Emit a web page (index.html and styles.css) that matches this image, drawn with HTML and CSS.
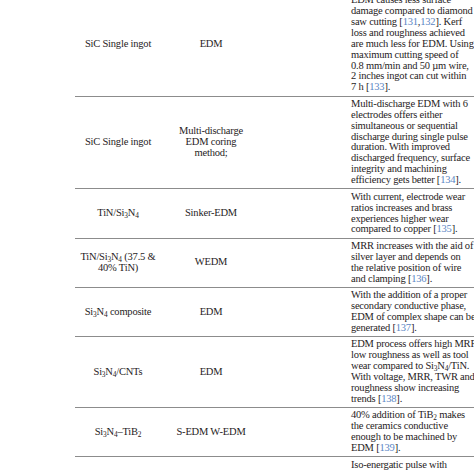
FILE: index.html
```html
<!DOCTYPE html>
<html>
<head>
<meta charset="utf-8">
<link rel="stylesheet" href="styles.css">
</head>
<body>
<table class="tbl">
  <colgroup>
    <col class="c-mat">
    <col class="c-proc">
    <col class="c-rem">
  </colgroup>
  <tr>
    <td class="lab">SiC Single ingot</td>
    <td class="lab">EDM</td>
    <td class="rem">EDM causes less surface<br>damage compared to diamond<br>saw cutting [<span class="ref">131</span>,<span class="ref">132</span>]. Kerf<br>loss and roughness achieved<br>are much less for EDM. Using<br>maximum cutting speed of<br>0.8 mm/min and 50 µm wire,<br>2 inches ingot can cut within<br>7 h [<span class="ref">133</span>].</td>
  </tr>
  <tr>
    <td class="lab">SiC Single ingot</td>
    <td class="lab">Multi-discharge<br>EDM coring<br>method;</td>
    <td class="rem">Multi-discharge EDM with 6<br>electrodes offers either<br>simultaneous or sequential<br>discharge during single pulse<br>duration. With improved<br>discharged frequency, surface<br>integrity and machining<br>efficiency gets better [<span class="ref">134</span>].</td>
  </tr>
  <tr>
    <td class="lab">TiN/Si<sub>3</sub>N<sub>4</sub></td>
    <td class="lab">Sinker-EDM</td>
    <td class="rem">With current, electrode wear<br>ratios increases and brass<br>experiences higher wear<br>compared to copper [<span class="ref">135</span>].</td>
  </tr>
  <tr>
    <td class="lab">TiN/Si<sub>3</sub>N<sub>4</sub> (37.5 &amp;<br>40% TiN)</td>
    <td class="lab">WEDM</td>
    <td class="rem">MRR increases with the aid of<br>silver layer and depends on<br>the relative position of wire<br>and clamping [<span class="ref">136</span>].</td>
  </tr>
  <tr>
    <td class="lab">Si<sub>3</sub>N<sub>4</sub> composite</td>
    <td class="lab">EDM</td>
    <td class="rem">With the addition of a proper<br>secondary conductive phase,<br>EDM of complex shape can be<br>generated [<span class="ref">137</span>].</td>
  </tr>
  <tr>
    <td class="lab">Si<sub>3</sub>N<sub>4</sub>/CNTs</td>
    <td class="lab">EDM</td>
    <td class="rem">EDM process offers high MRR,<br>low roughness as well as tool<br>wear compared to Si<sub>3</sub>N<sub>4</sub>/TiN.<br>With voltage, MRR, TWR and<br>roughness show increasing<br>trends [<span class="ref">138</span>].</td>
  </tr>
  <tr>
    <td class="lab">Si<sub>3</sub>N<sub>4</sub>–TiB<sub>2</sub></td>
    <td class="lab">S-EDM W-EDM</td>
    <td class="rem">40% addition of TiB<sub>2</sub> makes<br>the ceramics conductive<br>enough to be machined by<br>EDM [<span class="ref">139</span>].</td>
  </tr>
  <tr class="last">
    <td class="lab"></td>
    <td class="lab"></td>
    <td class="rem">Iso-energatic pulse with</td>
  </tr>
</table>
</body>
</html>
```

FILE: styles.css
```css
html, body {
  margin: 0;
  padding: 0;
  background: #ffffff;
  overflow: hidden;
  width: 474px;
  height: 474px;
}

.tbl {
  margin: -7.2px 0 0 75px;
  width: 404px;
  table-layout: fixed;
  border-collapse: collapse;
  font-family: "Liberation Serif", "Times New Roman", serif;
  font-size: 10.5px;
  letter-spacing: -0.2px;
  line-height: 10.9px;
  color: #1f1c1d;
}

.c-mat { width: 86px; }
.c-proc { width: 100px; }
.c-rem { width: 218px; }

.tbl td {
  padding: 2.3px 0;
  border-bottom: 1px solid #8c8c8c;
  vertical-align: middle;
  white-space: nowrap;
}

.tbl .lab {
  text-align: center;
}

.tbl .rem {
  text-align: left;
  padding-left: 90px;
}

.tbl .last td {
  border-bottom: none;
}

sub {
  font-size: 0.7em;
  line-height: 0;
  vertical-align: -0.25em;
}

.ref {
  color: #5a86c4;
}
```
